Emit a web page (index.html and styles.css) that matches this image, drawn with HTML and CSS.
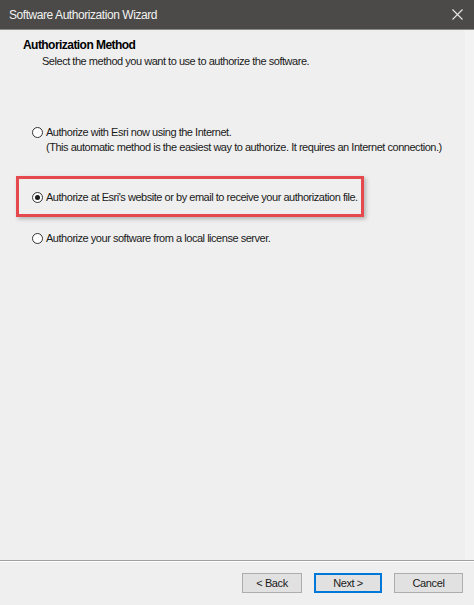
FILE: index.html
```html
<!DOCTYPE html>
<html lang="en">
<head>
    <meta charset="UTF-8">
    <meta name="viewport" content="width=device-width, initial-scale=1.0">
    <title>Software Authorization Wizard</title>
    <link rel="stylesheet" href="styles.css">
</head>
<body>
    <div class="window">
        <div class="titlebar">
            <span class="title">Software Authorization Wizard</span>
            <svg class="close" width="11" height="11" viewBox="0 0 11 11">
                <path d="M0.5 0.5 L10.5 10.5 M10.5 0.5 L0.5 10.5" stroke="#e8e8e8" stroke-width="1.1" fill="none"/>
            </svg>
        </div>

        <div class="content">
            <div class="header">
                <h1>Authorization Method</h1>
                <p>Select the method you want to use to authorize the software.</p>
            </div>

            <div class="options">
                <label class="option">
                    <span class="radio"></span>
                    <span class="text">Authorize with Esri now using the Internet.<br>(This automatic method is the easiest way to authorize. It requires an Internet connection.)</span>
                </label>
                <label class="option highlight">
                    <span class="radio checked"></span>
                    <span class="text">Authorize at Esri's website or by email to receive your authorization file.</span>
                </label>
                <label class="option">
                    <span class="radio"></span>
                    <span class="text">Authorize your software from a local license server.</span>
                </label>
            </div>
        </div>

        <div class="footer">
            <button class="btn">&lt; Back</button>
            <button class="btn default">Next &gt;</button>
            <button class="btn cancel">Cancel</button>
        </div>
    </div>
</body>
</html>
```

FILE: styles.css
```css
body {
    margin: 0;
    padding: 0;
    background: #efefef;
    font-family: "Liberation Sans", Arial, sans-serif;
    font-size: 11px;
    letter-spacing: -0.47px;
    color: #1a1a1a;
}
.window {
    width: 474px;
    height: 605px;
    display: flex;
    flex-direction: column;
    background: #efefef;
    overflow: hidden;
}
.titlebar {
    height: 29px;
    flex-shrink: 0;
    background: #4b4a48;
    border-bottom: 1px solid #8a8a88;
    display: flex;
    align-items: center;
    justify-content: space-between;
    padding: 0 11px 0 9px;
}
.title {
    color: #f2f2f2;
    font-size: 12px;
    letter-spacing: -0.44px;
}
.close {
    display: block;
}
.content {
    flex: 1;
    border-right: 9px solid #f3f3f3;
}
.header {
    padding: 8px 0 0 23px;
}
.header h1 {
    margin: 0;
    font-size: 12px;
    font-weight: bold;
    letter-spacing: -0.55px;
    color: #000;
    line-height: 15px;
}
.header p {
    margin: 1px 0 0 19px;
    line-height: 15px;
}
.options {
    margin-top: 56px;
    padding-left: 32px;
}
.option {
    display: flex;
    align-items: flex-start;
    gap: 3px;
    line-height: 15px;
    white-space: nowrap;
    margin-bottom: 21px;
}
.radio {
    width: 11px;
    height: 11px;
    margin-top: 2px;
    flex-shrink: 0;
    border: 1px solid #333;
    border-radius: 50%;
    background: #fff;
    box-sizing: border-box;
    position: relative;
}
.radio.checked::after {
    content: "";
    position: absolute;
    left: 2px;
    top: 2px;
    width: 5px;
    height: 5px;
    border-radius: 50%;
    background: #1a1a1a;
}
.option.highlight {
    width: 348px;
    box-sizing: border-box;
    margin: 0 0 14px -16px;
    padding: 11px 0 9px 13px;
    border: 3px solid #e5484d;
    box-shadow: 2px 2px 4px rgba(0, 0, 0, 0.25);
}
.footer {
    height: 44px;
    flex-shrink: 0;
    border-top: 1px solid #a0a0a0;
    box-shadow: inset 0 1px 0 #fff;
    display: flex;
    align-items: center;
    justify-content: flex-end;
    padding: 0 11px 0 0;
    gap: 12px;
}
.btn {
    width: 60px;
    height: 20px;
    background: #e1e1e1;
    border: 1px solid #adadad;
    font-family: "Liberation Sans", Arial, sans-serif;
    font-size: 11px;
    letter-spacing: -0.4px;
    color: #1a1a1a;
    padding: 0;
}
.btn.default {
    width: 68px;
    border: 2px solid #0078d7;
}
.btn.cancel {
    width: 69px;
}
```
